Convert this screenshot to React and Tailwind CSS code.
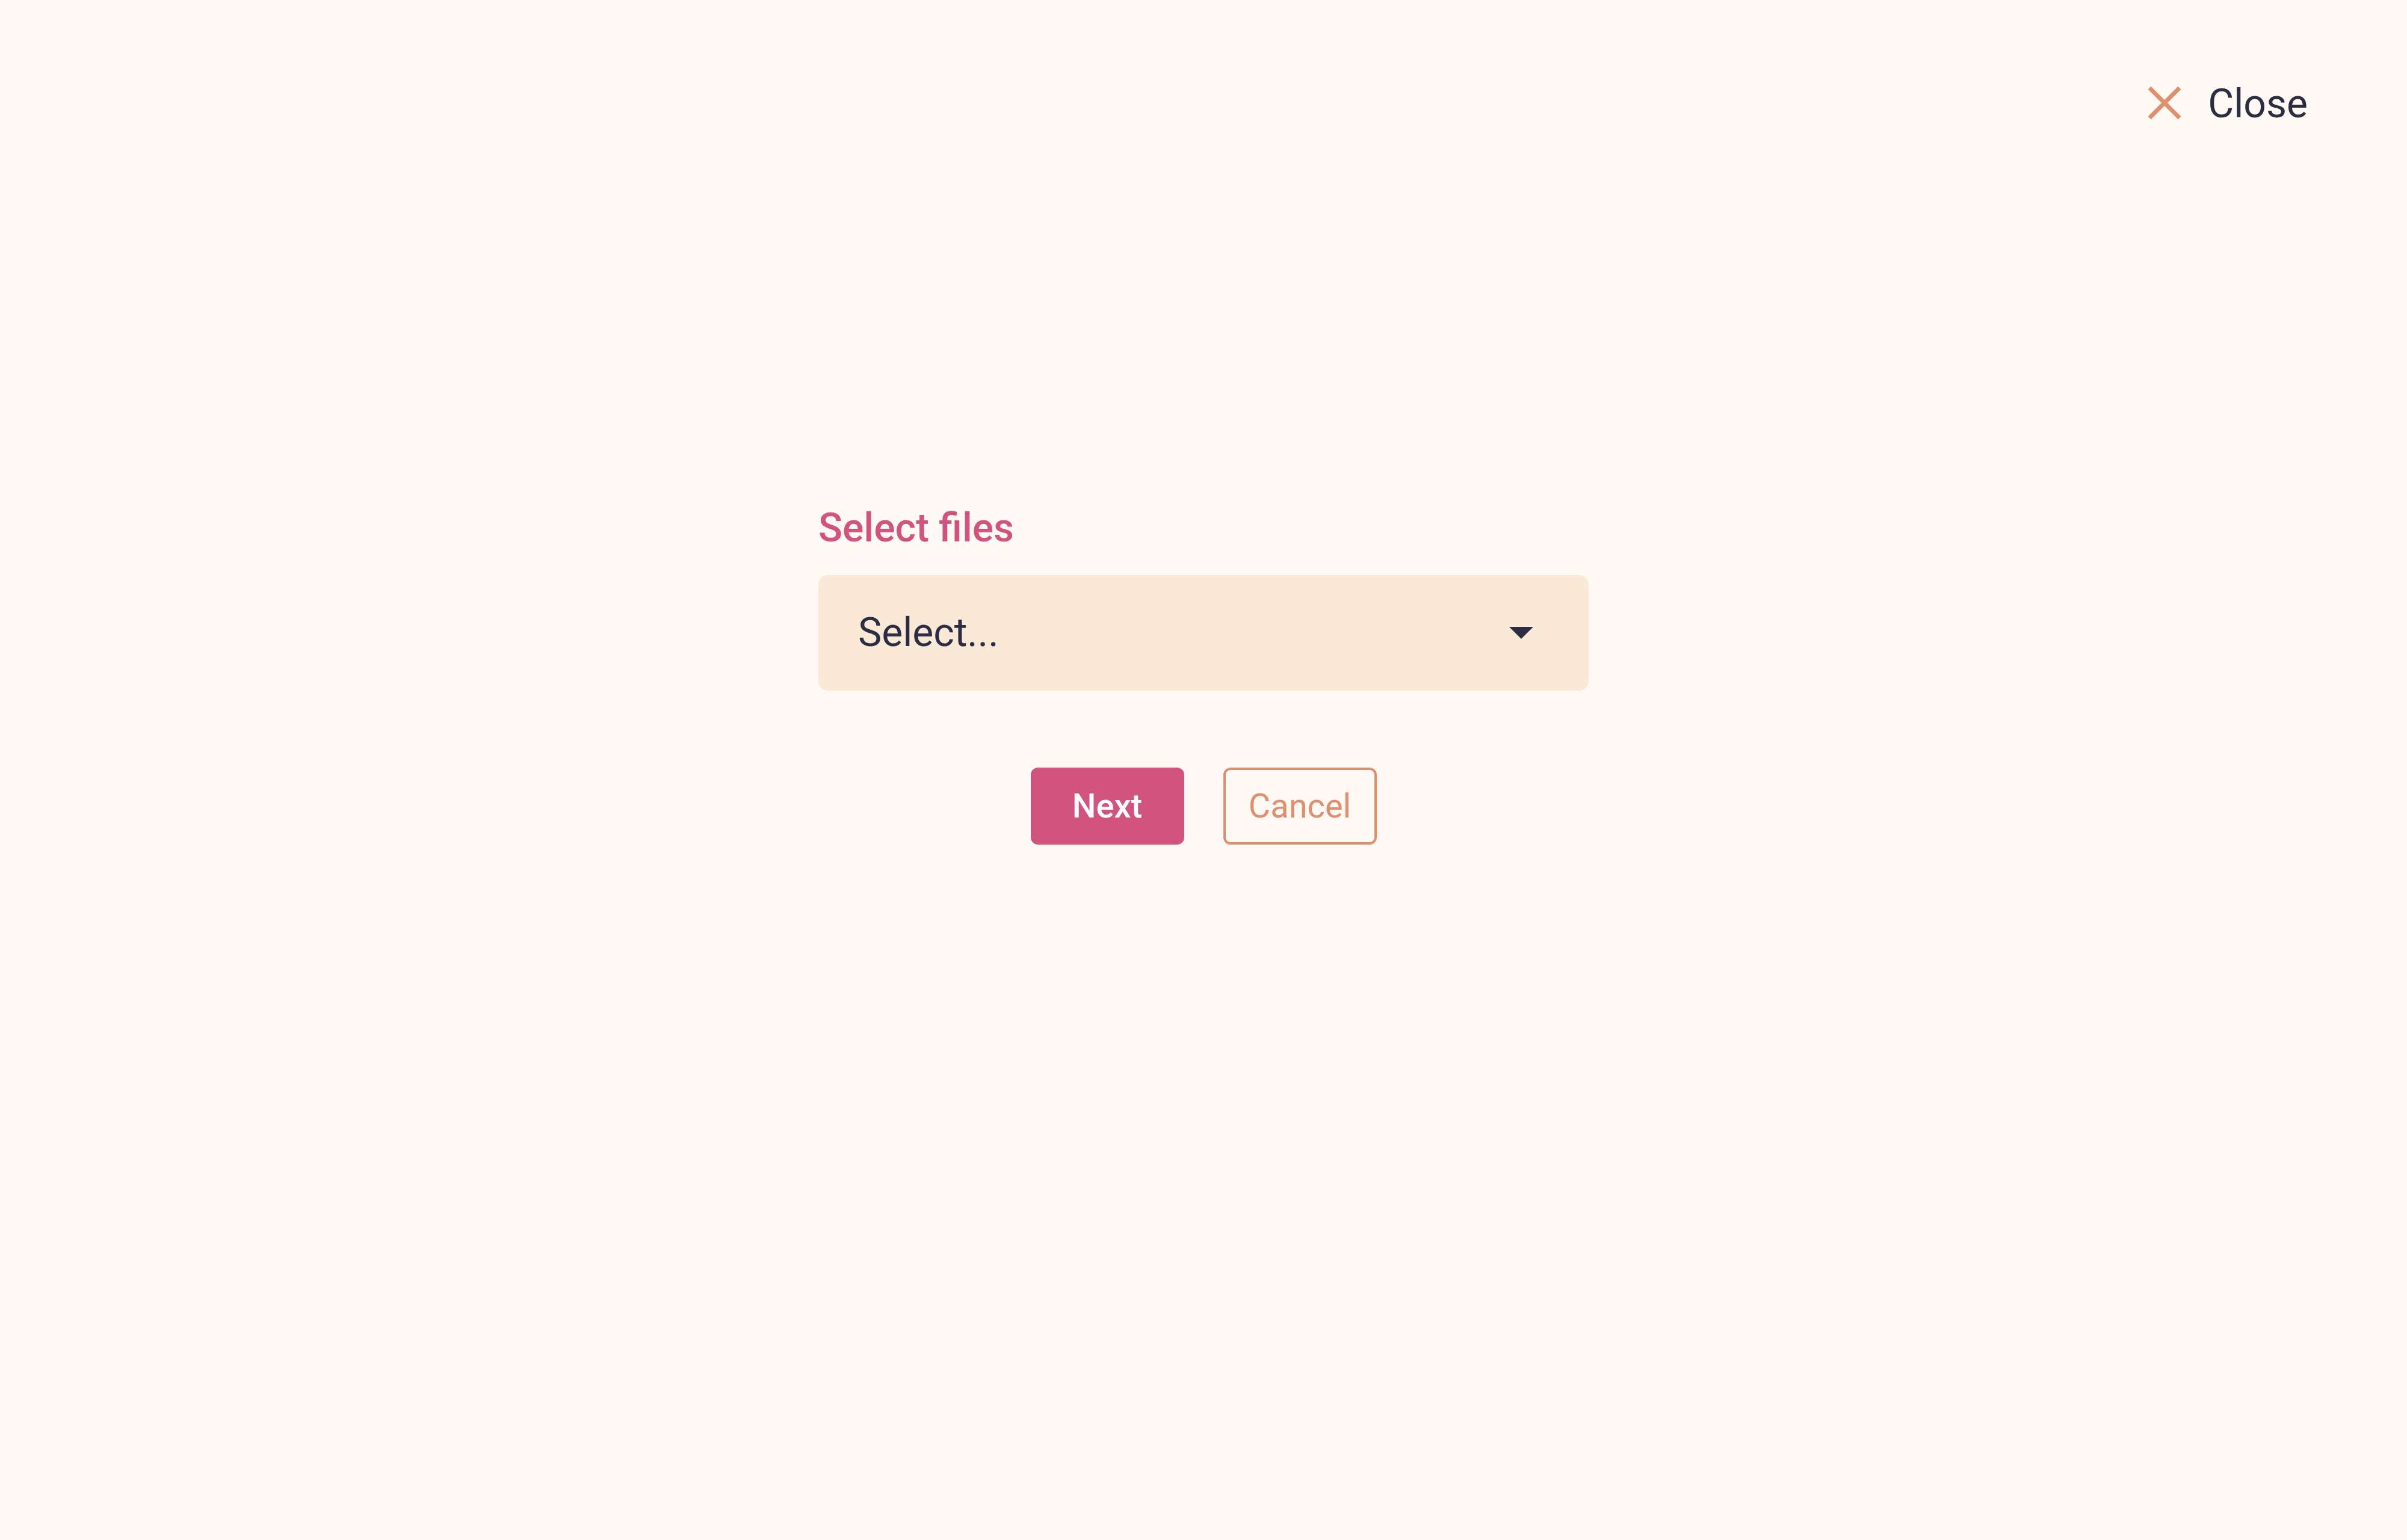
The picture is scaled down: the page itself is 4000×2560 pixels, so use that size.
import React from 'react';

const font = { fontFamily: 'Roboto, "Noto Sans", sans-serif' };

const CloseIcon = () => (
  <svg width="56" height="56" viewBox="0 0 56 56" fill="none">
    <path d="M3 3L53 53M53 3L3 53" stroke="#e08f6e" strokeWidth="7" />
  </svg>
);

const Caret = () => (
  <svg width="40" height="20" viewBox="0 0 40 20">
    <path d="M0 0H40L20 20Z" fill="#2b2d42" />
  </svg>
);

const App = () => {
  return (
    <div className="h-screen w-full bg-[#fff9f3] flex flex-col" style={font}>
      {/* Header */}
      <header className="flex justify-end pt-[131px] pr-[165px]">
        <button className="flex items-center gap-[44px] h-[80px] text-[66px] leading-none text-[#2b2d42]">
          <CloseIcon />
          <span className="pt-[4px]">Close</span>
        </button>
      </header>

      <main className="flex flex-col items-center mt-[628px]">
        <div className="w-[1280px]">
          <label className="block text-[66px] leading-[78px] font-medium text-[#d1547e]">Select files</label>

          <div className="mt-[39px] h-[192px] rounded-[16px] bg-[#fbe9d7] flex items-center justify-between pl-[66px] pr-[92px]">
            <span className="text-[66px] leading-none text-[#2b2d42]">Select...</span>
            <Caret />
          </div>
        </div>

        <div className="mt-[128px] flex gap-[65px]">
          <button className="w-[255px] h-[128px] rounded-[12px] bg-[#d1547e] text-white text-[56px] font-medium">
            Next
          </button>
          <button className="w-[255px] h-[128px] rounded-[12px] border-[4px] border-[#e08f6e] text-[#e08f6e] text-[56px]">
            Cancel
          </button>
        </div>
      </main>
    </div>
  );
};

export default App;
